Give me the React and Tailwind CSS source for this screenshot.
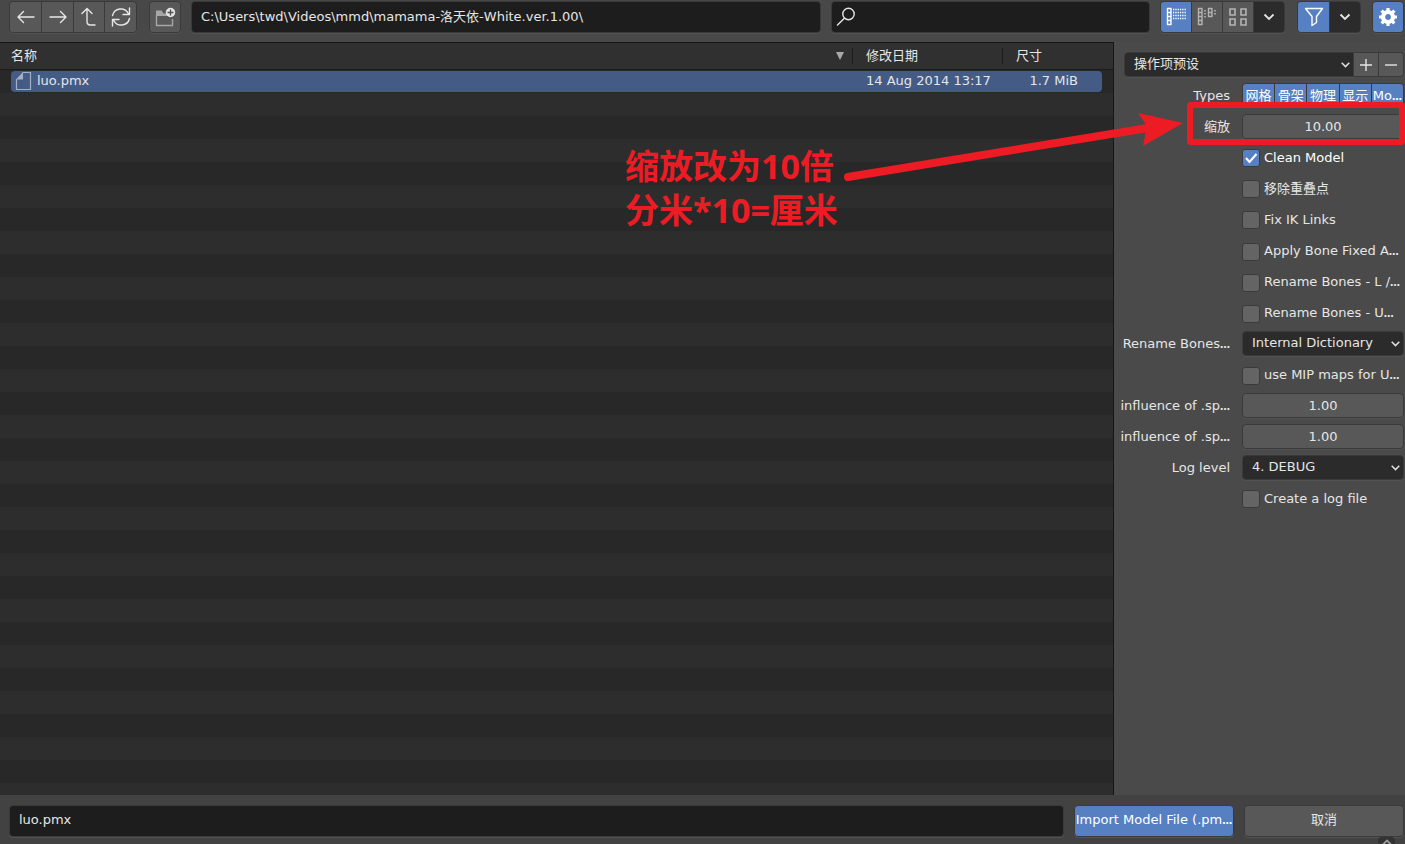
import React from "react";

const FIELD = "border border-[#3a3a3a] rounded shadow-[0_1px_0_#525252]";

function Cut({ children }) {
  return (
    <>
      {children}
      <span className="text-[10px] font-bold">…</span>
    </>
  );
}

function Icon({ size = 20, children, className = "" }) {
  return (
    <svg
      width={size}
      height={size}
      viewBox="0 0 20 20"
      fill="none"
      stroke="currentColor"
      strokeWidth="1.4"
      strokeLinecap="round"
      strokeLinejoin="round"
      className={className}
      aria-hidden="true"
    >
      {children}
    </svg>
  );
}

const Chevron = () => (
  <svg width="12" height="8" viewBox="0 0 12 8" fill="none" stroke="currentColor" strokeWidth="1.8" aria-hidden="true">
    <path d="M1.500 1.500 6 6l4.500-4.500" />
  </svg>
);

const SmallChevron = () => (
  <svg width="9" height="6" viewBox="0 0 9 6" fill="none" stroke="#e0e0e0" strokeWidth="1.5" className="pointer-events-none absolute inset-y-0 right-1 my-auto" aria-hidden="true">
    <path d="M.7.8 4.500 4.600 8.300.8" />
  </svg>
);

function ToolButton({ label, tone = "bg-[#585858]", children }) {
  return (
    <button aria-label={label} className={`flex h-full min-w-[30px] grow items-center justify-center ${tone}`}>
      {children}
    </button>
  );
}

const GROUP = "flex h-8 shrink-0 gap-px overflow-hidden rounded border border-[#3a3a3a] bg-[#3a3a3a] shadow-[0_1px_0_#525252]";

function ListIcon() {
  return (
    <Icon>
      <path d="M1.500 1.500h3.500v16H1.500zM1.500 5.500H5M1.500 9.500H5M1.500 13.500H5" strokeWidth="1.400" />
      <path d="M7 2.500h13M7 5.500h13M7 8.500h13M7 11.500h13" strokeWidth="1.300" strokeDasharray="1.300 1" strokeLinecap="butt" />
    </Icon>
  );
}

function DetailIcon() {
  return (
    <Icon>
      <path d="M1.500 1.500h3.500v16H1.500zM1.500 5.500H5M1.500 9.500H5M1.500 13.500H5" strokeWidth="1.400" />
      <path d="M11.500 1.500H15v8h-3.500zM11.500 5.500H15" strokeWidth="1.400" />
      <path d="M8 3v8M18 3v6" strokeWidth="1.600" strokeDasharray="1.500 1.500" strokeLinecap="butt" />
    </Icon>
  );
}

function Toolbar() {
  return (
    <header className="flex h-[42px] shrink-0 items-start bg-[#484848] pl-[9px] pr-px pt-px">
      <div className={`${GROUP} w-32`}>
        <ToolButton label="Back">
          <Icon><path d="M2 10h16M7.500 4.500 2 10l5.500 5.500" /></Icon>
        </ToolButton>
        <ToolButton label="Forward">
          <Icon><path d="M2 10h16M12.500 4.500 18 10l-5.500 5.500" /></Icon>
        </ToolButton>
        <ToolButton label="Parent directory">
          <Icon className="-ml-1"><path d="M5 6.500 10 1.500l5 5M10 1.500v13q0 3.500 3.500 3.500H18" /></Icon>
        </ToolButton>
        <ToolButton label="Refresh">
          <Icon>
            <path d="M1.500 8.500A8.500 8.500 0 0 1 17.300 6.500M18.500 1v6.500H12M18.500 11.500A8.500 8.500 0 0 1 2.700 13.500M1.500 19v-6.500H8" />
          </Icon>
        </ToolButton>
      </div>
      <div className={`${GROUP} ml-3`}>
        <ToolButton label="New folder">
          <svg width="22" height="22" viewBox="0 0 22 22" fill="none" aria-hidden="true">
            <path d="M2.500 9v10.500h16V13" stroke="#a6a6a6" strokeWidth="1.400" />
            <path d="M2 4.500h5.500l2 3h3l2 2.500H2z" fill="#a6a6a6" />
            <circle cx="16.500" cy="6.500" r="4.700" fill="#e6e6e6" />
            <path d="M16.500 3.500v6M13.500 6.500h6" stroke="#505050" strokeWidth="1.400" />
          </svg>
        </ToolButton>
      </div>
      <input
        aria-label="Directory path"
        defaultValue="C:\Users\twd\Videos\mmd\mamama-洛天依-White.ver.1.00\"
        className={`ml-2.5 h-8 w-0 grow bg-[#1d1d1d] px-[9px] pb-1 ${FIELD}`}
      />
      <div className={`ml-2.5 flex h-8 w-[319px] items-center bg-[#1d1d1d] pl-1 ${FIELD}`}>
        <Icon>
          <circle cx="12.500" cy="7" r="5.700" />
          <path d="M8.400 11.200 1.500 18" />
        </Icon>
        <input aria-label="Search" className="ml-1 min-w-0 grow bg-transparent outline-none" />
      </div>
      <div className={`${GROUP} ml-2.5`}>
        <ToolButton label="Vertical list" tone="bg-[#5680c2] text-white"><ListIcon /></ToolButton>
        <ToolButton label="Horizontal list" tone="bg-[#585858] text-[#b4b4b4]"><DetailIcon /></ToolButton>
        <ToolButton label="Thumbnails" tone="bg-[#585858] text-[#b4b4b4]">
          <Icon><path d="M2 2h5v6H2zM13 2h5v6h-5zM2 12h5v6H2zM13 12h5v6h-5z" strokeWidth="1.600" strokeLinejoin="miter" /></Icon>
        </ToolButton>
        <ToolButton label="Display settings" tone="bg-[#2b2b2b]"><Chevron /></ToolButton>
      </div>
      <div className={`${GROUP} ml-3 w-16`}>
        <ToolButton label="Filter" tone="bg-[#5680c2] text-white">
          <Icon><path d="M1.500 1.500h17l-6 8v6l-4.500 3v-9z" /></Icon>
        </ToolButton>
        <ToolButton label="Filter settings" tone="bg-[#2b2b2b]"><Chevron /></ToolButton>
      </div>
      <div className={`${GROUP} ml-[11px]`}>
        <ToolButton label="Toggle options" tone="bg-[#5680c2] text-white">
          <svg width="20" height="20" viewBox="0 0 20 20" aria-hidden="true">
            <circle cx="10" cy="10" r="5" fill="none" stroke="currentColor" strokeWidth="4.200" />
            <path d="M10 1v4M10 15v4M1 10h4M15 10h4M3.600 3.600l3 3M13.400 13.400l3 3M3.600 16.400l3-3M13.400 6.600l3-3" stroke="currentColor" strokeWidth="3.200" />
          </svg>
        </ToolButton>
      </div>
    </header>
  );
}

function FileList() {
  return (
    <main className="flex min-w-0 grow flex-col border-r border-t border-[#161616] bg-[repeating-linear-gradient(to_bottom,#282828_0px,#282828_23px,#2d2d2d_23px,#2d2d2d_46px)] bg-[position:0_27px]">
      <table className="w-full table-fixed border-collapse text-left">
        <colgroup>
          <col />
          <col className="w-[150px]" />
          <col className="w-[111px]" />
        </colgroup>
        <thead>
          <tr className="h-[26px] border-b border-[#1c1c1c] bg-[#303030]">
            <th className="pl-[11px] font-normal">
              <div className="flex items-center justify-between pr-2">
                <span>名称</span>
                <svg width="8" height="8" viewBox="0 0 8 8" fill="#a8a8a8" aria-hidden="true"><path d="M0 0h8L4 8z" /></svg>
              </div>
            </th>
            <th className="font-normal"><div className="border-l border-[#1c1c1c] pl-[13px] leading-4">修改日期</div></th>
            <th className="font-normal"><div className="border-l border-[#1c1c1c] pl-[13px] leading-4">尺寸</div></th>
          </tr>
        </thead>
        <tbody>
          <tr className="h-6">
            <td className="pl-[11px]">
              <div className="flex h-[21px] items-center rounded-l bg-[#435b85] pl-1">
                <svg width="18" height="20" viewBox="0 0 18 20" fill="none" aria-hidden="true">
                  <path d="M7.500 1.500h8v17h-14V8" stroke="#a3afc4" strokeWidth="1.200" />
                  <path d="M8 1v7.500H1z" fill="#a3afc4" />
                </svg>
                <span className="ml-1">luo.pmx</span>
              </div>
            </td>
            <td><div className="flex h-[21px] items-center bg-[#435b85] pl-3.5">14 Aug 2014 13:17</div></td>
            <td className="pr-[11px]"><div className="flex h-[21px] items-center justify-end rounded-r bg-[#435b85] pr-6">1.7 MiB</div></td>
          </tr>
        </tbody>
      </table>
    </main>
  );
}

function Row({ label, id, children }) {
  return (
    <div className="flex h-[31px] items-start">
      <label htmlFor={id} className="flex w-[118px] shrink-0 items-baseline justify-end whitespace-nowrap pr-3 leading-[26px]">{label}</label>
      {children}
    </div>
  );
}

function Check({ children, checked = false }) {
  return (
    <div className="flex h-[31px] items-start pl-[118px]">
      <label className={`flex items-center gap-1 whitespace-nowrap leading-[26px] ${checked ? "text-white" : ""}`}>
        <span className="relative flex">
          <input
            type="checkbox"
            defaultChecked={checked}
            className="peer size-[18px] appearance-none rounded-[3px] border border-[#3a3a3a] bg-[#646464] checked:bg-[#5680c2]"
          />
          <svg width="18" height="18" viewBox="0 0 18 18" fill="none" stroke="#fff" strokeWidth="2" className="pointer-events-none invisible absolute left-0 top-0 peer-checked:visible" aria-hidden="true">
            <path d="m4 9 3.500 4L14.500 5" />
          </svg>
        </span>
        <span>{children}</span>
      </label>
    </div>
  );
}

function NumberField({ id, value }) {
  return <input id={id} defaultValue={value} className={`h-[25px] min-w-0 grow bg-[#585858] text-center ${FIELD}`} />;
}

function Dropdown({ id, label, value, className = "rounded" }) {
  return (
    <div className="relative flex min-w-0 grow">
      <select id={id} aria-label={label} className={`h-[25px] w-full appearance-none border border-[#3a3a3a] bg-[#2b2b2b] pb-px pl-[9px] shadow-[0_1px_0_#525252] ${className}`}>
        <option>{value}</option>
      </select>
      <SmallChevron />
    </div>
  );
}

function Options() {
  const types = ["网格", "骨架", "物理", "显示", <Cut key="more">Mo</Cut>];
  return (
    <aside className="w-[291px] shrink-0 bg-[#4a4a4a] pl-2.5 pr-px pt-2.5">
      <div className="mb-1.5 flex">
        <Dropdown label="Operator presets" value="操作项预设" className="rounded-l" />
        <button aria-label="Add preset" className="flex h-[25px] w-[25px] items-center justify-center border-y border-r border-[#3a3a3a] bg-[#585858]">
          <svg width="12" height="12" stroke="currentColor" strokeWidth="1.400" aria-hidden="true"><path d="M6 0v12M0 6h12" /></svg>
        </button>
        <button aria-label="Remove preset" className="flex h-[25px] w-[25px] items-center justify-center rounded-r border-y border-r border-[#3a3a3a] bg-[#585858]">
          <svg width="12" height="12" stroke="currentColor" strokeWidth="1.400" aria-hidden="true"><path d="M0 6h12" /></svg>
        </button>
      </div>
      <Row label="Types">
        <div className="grid h-[25px] min-w-0 grow grid-cols-5 gap-px overflow-hidden rounded border border-[#3a3a3a] bg-[#3a3a3a] text-white">
          {types.map((t, i) => (
            <button key={i} className="flex items-baseline justify-center whitespace-nowrap bg-[#5680c2] leading-6">{t}</button>
          ))}
        </div>
      </Row>
      <div className="relative">
        <Row label="缩放" id="scale"><NumberField id="scale" value="10.00" /></Row>
        <div className="pointer-events-none absolute -right-px -top-3 h-[43px] w-[218px] rounded-sm border-[6px] border-[#ed1c24]" />
      </div>
      <Check checked>Clean Model</Check>
      <Check>移除重叠点</Check>
      <Check>Fix IK Links</Check>
      <Check><Cut>Apply Bone Fixed A</Cut></Check>
      <Check><Cut>Rename Bones - L /</Cut></Check>
      <Check><Cut>Rename Bones - U</Cut></Check>
      <Row label={<Cut>Rename Bones</Cut>} id="dictionary"><Dropdown id="dictionary" value="Internal Dictionary" /></Row>
      <Check><Cut>use MIP maps for U</Cut></Check>
      <Row label={<Cut>influence of .sp</Cut>} id="sph"><NumberField id="sph" value="1.00" /></Row>
      <Row label={<Cut>influence of .sp</Cut>} id="spa"><NumberField id="spa" value="1.00" /></Row>
      <Row label="Log level" id="log"><Dropdown id="log" value="4. DEBUG" /></Row>
      <Check>Create a log file</Check>
    </aside>
  );
}

function Annotation() {
  return (
    <div className="pointer-events-none absolute right-[218px] top-[100px] flex w-[562px] items-start text-[#ed1c24]">
      <p className="mt-11 w-[218px] shrink-0 whitespace-nowrap font-['Open_Sans','Noto_Sans_CJK_SC',sans-serif] text-[34px] font-bold leading-[44px]">
        缩放改为10倍
        <br />
        分米*10=厘米
      </p>
      <svg width="344" height="90" viewBox="0 0 344 90" className="shrink-0" aria-hidden="true">
        <path d="M5 77 305 28" stroke="currentColor" strokeWidth="8" strokeLinecap="round" />
        <path d="M340 23 295 13 304 26 300 46z" fill="currentColor" />
      </svg>
    </div>
  );
}

function Footer() {
  return (
    <footer className="relative flex h-[49px] shrink-0 items-start bg-[#424242] pl-[9px] pr-px pt-2.5">
      <input aria-label="File name" defaultValue="luo.pmx" className={`h-8 min-w-0 grow bg-[#1d1d1d] px-[9px] pb-1 ${FIELD}`} />
      <button className={`ml-2.5 h-8 w-[160px] whitespace-nowrap bg-[#5680c2] pb-0.5 text-white ${FIELD}`}><Cut>Import Model File (.pm</Cut></button>
      <button className={`ml-2.5 h-8 w-[160px] bg-[#585858] pb-0.5 ${FIELD}`}>取消</button>
      <div className="absolute bottom-0 right-2.5 flex h-[7px] w-[17px] justify-center overflow-hidden rounded-t bg-[#333]">
        <svg width="12" height="8" viewBox="0 0 12 8" fill="none" stroke="#999" strokeWidth="1.800" className="mt-0.5 shrink-0" aria-hidden="true"><path d="M1 6.500 6 1.500l5 5" /></svg>
      </div>
    </footer>
  );
}

export default function App() {
  return (
    <div className="relative flex min-h-screen flex-col bg-[#484848] font-['DejaVu_Sans','Noto_Sans_CJK_SC',sans-serif] text-[13px] leading-5 text-[#e6e6e6]">
      <Toolbar />
      <div className="flex grow">
        <FileList />
        <Options />
      </div>
      <Footer />
      <Annotation />
    </div>
  );
}
